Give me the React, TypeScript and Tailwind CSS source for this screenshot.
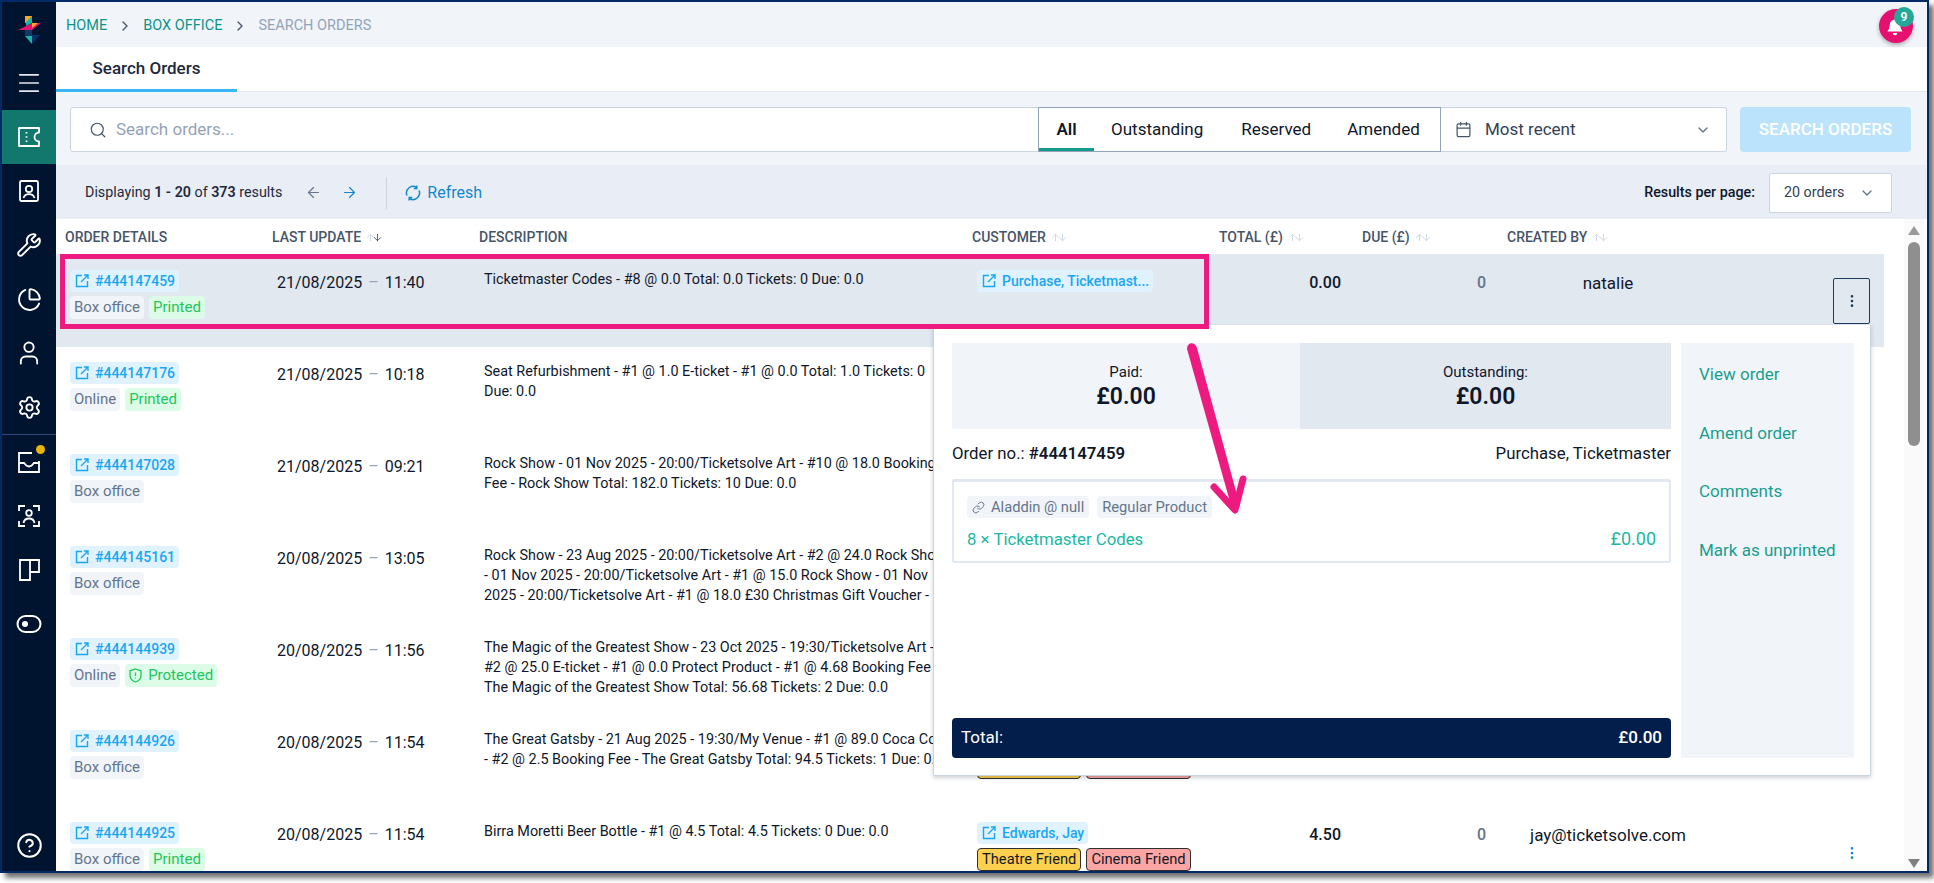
import {
  ArrowDown,
  ArrowLeft,
  ArrowRight,
  ArrowUp,
  Calendar,
  ChartPie,
  ChevronDown,
  ChevronRight,
  CircleHelp,
  EllipsisVertical,
  Link,
  Menu,
  Search,
  Settings,
  User,
  Wrench,
} from "lucide-react";
import type { ReactNode } from "react";

const OpenIcon = () => (
  <svg width="14" height="14" viewBox="0 0 14 14" fill="none" stroke="currentColor" strokeWidth="1.4" className="shrink-0">
    <path d="M7 1.5H1.5v11h11V7" />
    <path d="M6 8l6.5-6.5M9 1h4v4" />
  </svg>
);

const SortIcon = ({ active = false }: { active?: boolean }) => (
  <span className="flex ml-[4px]">
    <ArrowUp size={11} strokeWidth={2} className="text-[#cbd5e1] -mr-[4px]" />
    <ArrowDown size={11} strokeWidth={2} className={active ? "text-[#475569]" : "text-[#cbd5e1]"} />
  </span>
);

const TicketIcon = () => (
  <svg width="24" height="24" viewBox="0 0 24 24" fill="none" stroke="white" strokeWidth="1.8">
    <path d="M2 3h20v4.5a4.5 4.5 0 0 0 0 9V21H2z" strokeLinejoin="round" />
    <path d="M9.5 7v1.5M9.5 11.2v1.6M9.5 15.5V17" />
  </svg>
);

const ContactIcon = () => (
  <svg width="24" height="24" viewBox="0 0 24 24" fill="none" stroke="white" strokeWidth="1.8">
    <rect x="3" y="2" width="18" height="20" rx="1.5" />
    <circle cx="12" cy="10" r="3.2" />
    <path d="M6.5 19c1-3 3-3.8 5.5-3.8s4.500.8 5.500 3.800" />
  </svg>
);

const InboxIcon = () => (
  <svg width="24" height="24" viewBox="0 0 24 24" fill="none" stroke="white" strokeWidth="1.8">
    <path d="M15 3H2v19h20v-11" />
    <path d="M2 13h5c1 0 1 3.500 5 3.500s4-3.500 5-3.500h5" />
  </svg>
);

const ScanIcon = () => (
  <svg width="24" height="24" viewBox="0 0 24 24" fill="none" stroke="white" strokeWidth="1.8">
    <path d="M2 7V2h6M16 2h6v5M2 17v5h6M16 22h6v-5" />
    <circle cx="12" cy="9" r="2.800" />
    <path d="M6.500 19c.5-3 2.500-4.500 5.500-4.500s5 1.500 5.500 4.500" />
  </svg>
);

const BoardIcon = () => (
  <svg width="24" height="24" viewBox="0 0 24 24" fill="none" stroke="white" strokeWidth="1.8">
    <path d="M3 2h19v12h-9v8H3zM13 2v12" />
  </svg>
);

const ToggleIcon = () => (
  <svg width="26" height="20" viewBox="0 0 26 20" fill="none" stroke="white" strokeWidth="2">
    <rect x="1.500" y="2" width="23" height="16" rx="8" />
    <circle cx="9" cy="10" r="3" fill="white" stroke="none" />
  </svg>
);

const RefreshIcon = () => (
  <svg width="16" height="16" viewBox="0 0 16 16" fill="none" stroke="currentColor" strokeWidth="1.500">
    <path d="M2 10.500A6.500 6.500 0 0 1 11.500 2.500M14 5.500A6.500 6.500 0 0 1 4.500 13.500" />
    <path d="M11.800.6v3h-3M4.200 15.400v-3h3" />
  </svg>
);

const SideItem = ({ children, active = false }: { children: ReactNode; active?: boolean }) => (
  <div className={`h-[54px] flex items-center justify-center ${active ? "bg-[#12776c]" : ""}`}>{children}</div>
);

const Sidebar = () => (
  <aside className="w-[54px] shrink-0 bg-[#00142f] flex flex-col">
    <div className="h-[54px] flex items-center justify-center">
      <svg width="36" height="38" viewBox="0 0 36 38">
        <path d="M14 6h7v7h-7z" fill="#f9a825" />
        <path d="M21 6v7h-7z" fill="#14b8a6" />
        <path d="M15 13h6l-6 3z" fill="#14b8a6" />
        <path d="M7 20l14-7v7z" fill="#e5106f" />
        <path d="M21 13h9l-9 7z" fill="#e5106f" />
        <path d="M21 13h6l-6 5z" fill="#f9a825" />
        <path d="M14 20h7v6h-7z" fill="#0e3a66" />
        <path d="M14 25h15l-8 9z" fill="#07306b" />
        <path d="M14 26h7v8z" fill="#14b8a6" />
      </svg>
    </div>
    <SideItem>
      <Menu size={28} color="#e2e8f0" strokeWidth={1.600} absoluteStrokeWidth />
    </SideItem>
    <SideItem active>
      <TicketIcon />
    </SideItem>
    <SideItem>
      <ContactIcon />
    </SideItem>
    <SideItem>
      <Wrench size={26} color="white" strokeWidth={1.800} />
    </SideItem>
    <SideItem>
      <ChartPie size={25} color="white" strokeWidth={1.800} />
    </SideItem>
    <SideItem>
      <User size={28} color="white" strokeWidth={1.600} />
    </SideItem>
    <SideItem>
      <Settings size={25} color="white" strokeWidth={1.800} />
    </SideItem>
    <div className="h-px bg-[#2b4a7a]" />
    <SideItem>
      <span className="relative flex">
        <InboxIcon />
        <span className="absolute -top-[5px] -right-[4px] w-[9px] h-[9px] rounded-full bg-[#eab308]" />
      </span>
    </SideItem>
    <SideItem>
      <ScanIcon />
    </SideItem>
    <SideItem>
      <BoardIcon />
    </SideItem>
    <SideItem>
      <ToggleIcon />
    </SideItem>
    <div className="mt-auto h-[52px] flex items-center justify-center">
      <CircleHelp size={27} color="white" strokeWidth={1.800} />
    </div>
  </aside>
);

const Chip = ({ children, className }: { children: ReactNode; className: string }) => (
  <span className={`inline-flex items-center h-[23px] px-[4px] rounded-[4px] whitespace-nowrap ${className}`}>
    {children}
  </span>
);

const LinkBadge = ({ text }: { text: string }) => (
  <span className="inline-flex items-center gap-[6px] h-[22px] pl-[5px] pr-[4px] rounded-[4px] bg-[#e0f2fe] text-[#1aa7f0] text-[14px] font-medium whitespace-nowrap">
    <OpenIcon />
    {text}
  </span>
);

const FriendTags = () => (
  <div className="flex gap-[5px] mt-px">
    <Chip className="bg-[#fdd04e] border border-[#2f2f2f] text-[#111827] text-[14.700px]">Theatre Friend</Chip>
    <Chip className="bg-[#fca5a5] border border-[#2f2f2f] text-[#111827] text-[14.700px]">Cinema Friend</Chip>
  </div>
);

type Row = {
  id: string;
  source: string;
  status?: "Printed" | "Protected";
  date: string;
  time: string;
  lines: string[];
  customer?: string;
  friends?: boolean;
  total?: string;
  due?: string;
  by?: string;
  selected?: boolean;
  kebab?: boolean;
};

const rows: Row[] = [
  {
    id: "#444147459",
    source: "Box office",
    status: "Printed",
    date: "21/08/2025",
    time: "11:40",
    lines: ["Ticketmaster Codes - #8 @ 0.0 Total: 0.0 Tickets: 0 Due: 0.0"],
    customer: "Purchase, Ticketmast...",
    total: "0.00",
    due: "0",
    by: "natalie",
    selected: true,
    kebab: true,
  },
  {
    id: "#444147176",
    source: "Online",
    status: "Printed",
    date: "21/08/2025",
    time: "10:18",
    lines: ["Seat Refurbishment - #1 @ 1.0 E-ticket - #1 @ 0.0 Total: 1.0 Tickets: 0", "Due: 0.0"],
  },
  {
    id: "#444147028",
    source: "Box office",
    date: "21/08/2025",
    time: "09:21",
    lines: ["Rock Show - 01 Nov 2025 - 20:00/Ticketsolve Art - #10 @ 18.0 Booking", "Fee - Rock Show Total: 182.0 Tickets: 10 Due: 0.0"],
  },
  {
    id: "#444145161",
    source: "Box office",
    date: "20/08/2025",
    time: "13:05",
    lines: [
      "Rock Show - 23 Aug 2025 - 20:00/Ticketsolve Art - #2 @ 24.0 Rock Show",
      "- 01 Nov 2025 - 20:00/Ticketsolve Art - #1 @ 15.0 Rock Show - 01 Nov",
      "2025 - 20:00/Ticketsolve Art - #1 @ 18.0 £30 Christmas Gift Voucher -",
    ],
  },
  {
    id: "#444144939",
    source: "Online",
    status: "Protected",
    date: "20/08/2025",
    time: "11:56",
    lines: [
      "The Magic of the Greatest Show - 23 Oct 2025 - 19:30/Ticketsolve Art -",
      "#2 @ 25.0 E-ticket - #1 @ 0.0 Protect Product - #1 @ 4.68 Booking Fee -",
      "The Magic of the Greatest Show Total: 56.68 Tickets: 2 Due: 0.0",
    ],
  },
  {
    id: "#444144926",
    source: "Box office",
    date: "20/08/2025",
    time: "11:54",
    lines: ["The Great Gatsby - 21 Aug 2025 - 19:30/My Venue - #1 @ 89.0 Coca Cola", "- #2 @ 2.5 Booking Fee - The Great Gatsby Total: 94.5 Tickets: 1 Due: 0.0"],
    customer: "Edwards, Jay",
    friends: true,
  },
  {
    id: "#444144925",
    source: "Box office",
    status: "Printed",
    date: "20/08/2025",
    time: "11:54",
    lines: ["Birra Moretti Beer Bottle - #1 @ 4.5 Total: 4.5 Tickets: 0 Due: 0.0"],
    customer: "Edwards, Jay",
    friends: true,
    total: "4.50",
    due: "0",
    by: "jay@ticketsolve.com",
    kebab: true,
  },
];

const gridCols = "grid grid-cols-[216px_207px_493px_247px_143px_145px_202px_175px]";

const OrderRow = ({ row }: { row: Row }) => (
  <div className={`${gridCols} h-[92px] shrink-0 ${row.selected ? "bg-[#e2e8f0]" : "bg-white"}`}>
    <div className="pt-[15px] pl-[14px]">
      <LinkBadge text={row.id} />
      <div className="flex gap-[5px] mt-px text-[15px]">
        <Chip className="bg-[#f1f5f9] text-[#64748b]">{row.source}</Chip>
        {row.status === "Printed" && <Chip className="bg-[#dcfce7] text-[#22c55e]">Printed</Chip>}
        {row.status === "Protected" && (
          <Chip className="bg-[#dcfce7] text-[#22c55e] gap-[6px]">
            <svg width="13" height="15" viewBox="0 0 13 15" fill="none" stroke="currentColor" strokeWidth="1.300">
              <path d="M6.500 1L12 2.800V7.500C12 11 9.500 13 6.500 14 3.500 13 1 11 1 7.500V2.800z" />
              <path d="M6.500 4.500v3.500M6.500 9.500v1" />
            </svg>
            Protected
          </Chip>
        )}
      </div>
    </div>
    <div className="pt-[16px] pl-[5px] text-[16px] text-[#0f172a] whitespace-nowrap">
      {row.date}
      <span className="text-[#94a3b8] mx-[6px]">–</span>
      {row.time}
    </div>
    <div className="pt-[15px] pl-[5px] text-[14.400px] leading-[20px] text-[#0f172a] whitespace-nowrap">
      {row.lines.map((line) => (
        <div key={line}>{line}</div>
      ))}
    </div>
    <div className="pt-[15px] pl-[5px]">
      {row.customer && <LinkBadge text={row.customer} />}
      {row.friends && <FriendTags />}
    </div>
    <div className="pt-[16px] pr-[21px] text-right text-[16px] font-medium text-[#0f172a]">{row.total}</div>
    <div className="pt-[16px] pr-[21px] text-right text-[16px] font-medium text-[#64748b]">{row.due}</div>
    <div className="pt-[16px] text-center text-[17px] text-[#0f172a]">{row.by}</div>
    <div className="flex justify-end pr-[14px] pt-[23px]">
      {row.kebab && (
        <button className={`w-[37px] h-[46px] flex items-center justify-center rounded-[2px] ${row.selected ? "border border-[#1e3a5f] text-[#1e3a5f]" : "text-[#1387cb]"}`}>
          <EllipsisVertical size={16} strokeWidth={2} />
        </button>
      )}
    </div>
  </div>
);

const Head = ({ label, sort = true, active = false, className = "" }: { label: string; sort?: boolean; active?: boolean; className?: string }) => (
  <div className={`flex items-center pt-[2px] text-[14px] font-medium text-[#475569] whitespace-nowrap ${className}`}>
    {label}
    {sort && <SortIcon active={active} />}
  </div>
);

const Popover = () => (
  <div className="absolute left-[933px] top-[325px] w-[938px] h-[451px] bg-white border border-[#cbd5e1] border-t-0 shadow-[0_2px_4px_rgba(15,23,42,0.2)] rounded-b-[2px] pt-[18px] pl-[18px] flex gap-[10px]">
    <div className="w-[719px] h-[415px] flex flex-col">
      <div className="grid grid-cols-[348px_371px] h-[86px] text-center text-[#0f172a]">
        <div className="bg-[#f1f5f9] flex flex-col items-center justify-center pt-px">
          <div className="text-[15px] leading-[20px]">Paid:</div>
          <div className="text-[23px] leading-[30px] font-semibold">£0.00</div>
        </div>
        <div className="bg-[#e2e8f0] flex flex-col items-center justify-center pt-px">
          <div className="text-[15px] leading-[20px]">Outstanding:</div>
          <div className="text-[23px] leading-[30px] font-semibold">£0.00</div>
        </div>
      </div>
      <div className="flex justify-between items-center h-[50px] text-[16.800px] text-[#0f172a]">
        <div>
          Order no.: <span className="font-semibold">#444147459</span>
        </div>
        <div>Purchase, Ticketmaster</div>
      </div>
      <div className="h-[84px] border-2 border-t-[3px] border-[#e2e8f0] rounded-[2px] px-[13px] pt-[14px]">
        <div className="flex gap-[8px] text-[14.700px]">
          <span className="inline-flex items-center gap-[6px] h-[22px] px-[5px] rounded-[4px] bg-[#f1f5f9] text-[#64748b]">
            <Link size={13} strokeWidth={1.800} />
            Aladdin @ null
          </span>
          <span className="inline-flex items-center h-[22px] px-[5px] rounded-[4px] bg-[#f1f5f9] text-[#64748b]">Regular Product</span>
        </div>
        <div className="flex justify-between mt-[10px] text-[16.800px] leading-[22px] text-[#1bb8a2]">
          <span>8 × Ticketmaster Codes</span>
          <span className="text-[18px]">£0.00</span>
        </div>
      </div>
      <div className="mt-auto h-[40px] flex items-center justify-between px-[9px] rounded-[4px] bg-[#041e4c] text-white text-[17px]">
        <span>Total:</span>
        <span className="font-medium">£0.00</span>
      </div>
    </div>
    <div className="w-[173px] h-[415px] bg-[#f1f5f9] pl-[18px] pt-[21px] flex flex-col gap-[38.500px] text-[17px] leading-[20px] text-[#1a9e90]">
      <span>View order</span>
      <span>Amend order</span>
      <span>Comments</span>
      <span>Mark as unprinted</span>
    </div>
  </div>
);

const Annotation = () => (
  <>
    <div className="absolute left-[60px] top-[254px] w-[1149px] h-[75px] border-[5px] border-[#ed1b80]" />
    <svg className="absolute left-0 top-0 pointer-events-none" width="1934" height="883" fill="none">
      <path d="M1187 349c0-7 8-8 10-1l43 158-8 3-45-160z" fill="#ed1b80" />
      <path d="M1214 487l21 23 8-31" stroke="#ed1b80" strokeWidth="7" strokeLinecap="round" strokeLinejoin="round" />
    </svg>
  </>
);

export default function App() {
  return (
    <div className="relative w-[1934px] h-[883px] bg-white overflow-hidden font-['Roboto',sans-serif]">
      <div className="w-[1929px] h-[873px] border-2 border-[#012a66] bg-white flex shadow-[5px_5px_5px_rgba(0,0,0,0.55)]">
        <Sidebar />
        <main className="flex-1 min-w-0 flex flex-col">
          <div className="h-[45px] shrink-0 bg-[#f1f5f9] flex items-center pl-[10px] pr-[14px] pt-[2px] text-[14.500px]">
            <span className="text-[#0d9488]">HOME</span>
            <ChevronRight size={16} className="text-[#475569] mx-[10px]" />
            <span className="text-[#0d9488]">BOX OFFICE</span>
            <ChevronRight size={16} className="text-[#475569] mx-[10px]" />
            <span className="text-[#94a3b8]">SEARCH ORDERS</span>
            <span className="ml-auto relative w-[34px] h-[34px] rounded-full bg-[#e5106f] shadow-[0_2px_4px_rgba(0,0,0,0.3)] flex items-center justify-center">
              <svg width="18" height="18" viewBox="0 0 24 24" fill="white" className="mt-[3px] -ml-[3px]">
                <path d="M12 2a7 7 0 0 0-7 7c0 6-3 8-3 9h20c0-1-3-3-3-9a7 7 0 0 0-7-7zM9 20a3 3 0 0 0 6 0z" />
              </svg>
              <span className="absolute -top-[2px] -right-[1px] w-[20px] h-[20px] rounded-full bg-[#25a897] text-white text-[12px] font-semibold flex items-center justify-center">9</span>
            </span>
          </div>

          <div className="h-[45px] shrink-0 bg-white flex items-end border-b border-[#e2e8f0]">
            <div className="w-[181px] h-[45px] -mb-px pt-[2px] flex items-center justify-center border-b-[3px] border-[#38b6f5] text-[17px] font-medium text-[#1e293b]">
              Search Orders
            </div>
          </div>

          <div className="h-[73px] shrink-0 bg-[#f1f5f9] flex items-center pl-[14px] pr-[16px] pt-[2px]">
            <div className="flex-1 h-[45px] bg-white border border-[#cbd5e1] rounded-l-[3px] flex items-center pl-[18px] gap-[9px] text-[#94a3b8] text-[17px]">
              <Search size={18} className="text-[#475569]" strokeWidth={1.600} />
              Search orders...
            </div>
            <div className="w-[403px] h-[45px] bg-white border border-[#94a3b8] flex items-center relative text-[17px] text-[#0f172a] -ml-px">
              <span className="w-[55px] h-full flex items-center justify-center font-semibold border-b-[3px] border-[#159a8c] pt-[3px]">All</span>
              <span className="ml-[17px]">Outstanding</span>
              <span className="ml-[38px]">Reserved</span>
              <span className="ml-[36px]">Amended</span>
            </div>
            <div className="w-[286px] h-[45px] bg-white border border-l-0 border-[#cbd5e1] rounded-r-[3px] flex items-center pl-[14px] pr-[15px] text-[17px] text-[#334155]">
              <Calendar size={17} strokeWidth={1.700} className="text-[#475569]" />
              <span className="ml-[13px]">Most recent</span>
              <ChevronDown size={16} className="ml-auto text-[#64748b]" />
            </div>
            <button className="ml-[13px] w-[171px] h-[45px] rounded-[4px] bg-[#bbe3fb] text-white text-[17px] font-medium">SEARCH ORDERS</button>
          </div>

          <div className="h-[54px] shrink-0 bg-[#e9eef6] flex items-center pl-[29px] pr-[35px] pt-px text-[14.300px] text-[#1e293b]">
            <span>
              Displaying <span className="font-semibold">1 - 20</span> of <span className="font-semibold">373</span> results
            </span>
            <ArrowLeft size={17} className="ml-[23px] text-[#64748b]" strokeWidth={1.700} />
            <ArrowRight size={17} className="ml-[19px] text-[#1387cb]" strokeWidth={1.700} />
            <div className="ml-[28px] h-[32px] w-px bg-[#cbd5e1]" />
            <span className="ml-[18px] flex items-center gap-[6px] text-[#1387cb] text-[16px]">
              <RefreshIcon />
              Refresh
            </span>
            <span className="ml-auto font-medium text-[#0f172a]">Results per page:</span>
            <div className="ml-[14px] w-[123px] h-[40px] bg-white border border-[#cbd5e1] rounded-[2px] flex items-center pl-[14px] pr-[16px] text-[#334155]">
              20 orders
              <ChevronDown size={16} className="ml-auto text-[#64748b]" />
            </div>
          </div>

          <div className="flex-1 min-h-0 flex overflow-hidden">
            <div className="w-[1828px] shrink-0 flex flex-col overflow-hidden">
              <div className={`${gridCols} h-[36px] shrink-0 bg-white border-b border-[#e2e8f0]`}>
                <Head label="ORDER DETAILS" sort={false} className="pl-[9px]" />
                <Head label="LAST UPDATE" active />
                <Head label="DESCRIPTION" sort={false} />
                <Head label="CUSTOMER" />
                <Head label="TOTAL (£)" />
                <Head label="DUE (£)" />
                <Head label="CREATED BY" />
                <div />
              </div>
              {rows.map((row) => (
                <OrderRow key={row.id} row={row} />
              ))}
            </div>
            <div className="ml-[20px] w-[20px] bg-[#fafafa] flex flex-col items-center pt-[7px] pb-[3px]">
              <svg width="12" height="9" viewBox="0 0 12 9">
                <path d="M6 0l6 9H0z" fill="#9a9a9a" />
              </svg>
              <div className="mt-[7px] w-[12px] h-[204px] rounded-full bg-[#8f8f8f]" />
              <svg width="12" height="9" viewBox="0 0 12 9" className="mt-auto">
                <path d="M6 9L0 0h12z" fill="#808080" />
              </svg>
            </div>
          </div>
        </main>
      </div>
      <Popover />
      <Annotation />
    </div>
  );
}
